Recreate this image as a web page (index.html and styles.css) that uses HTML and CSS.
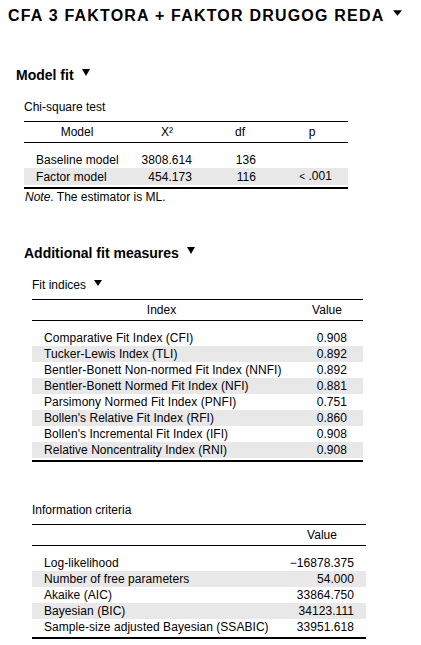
FILE: index.html
```html
<!DOCTYPE html>
<html lang="sr">
<head>
<meta charset="utf-8">
<title>CFA 3 FAKTORA + FAKTOR DRUGOG REDA</title>
<link rel="stylesheet" href="styles.css">
</head>
<body>
<h1 class="title">CFA 3 FAKTORA + FAKTOR DRUGOG REDA<svg class="caret caret-lg" viewBox="0 0 10 6"><polygon points="0,0 10,0 5,6"/></svg></h1>

<section class="group group-model">
  <h2 class="group-title">Model fit<svg class="caret caret-md" viewBox="0 0 8 7"><polygon points="0,0 8,0 4,7"/></svg></h2>
  <div class="result">
    <div class="table-title">Chi-square test</div>
    <div class="tbl tbl-chi">
      <table>
        <thead>
          <tr><th class="c-model">Model</th><th class="c-x2">X²</th><th class="c-df">df</th><th class="c-p">p</th></tr>
        </thead>
        <tbody>
          <tr><td class="c-model">Baseline model</td><td class="c-x2">3808.614</td><td class="c-df">136</td><td class="c-p"></td></tr>
          <tr class="alt"><td class="c-model">Factor model</td><td class="c-x2">454.173</td><td class="c-df">116</td><td class="c-p"><span class="lt">&lt;</span> .001</td></tr>
        </tbody>
      </table>
    </div>
    <div class="note"><i>Note</i>. The estimator is ML.</div>
  </div>
</section>

<section class="group group-add">
  <h2 class="group-title">Additional fit measures<svg class="caret caret-md" viewBox="0 0 8 7"><polygon points="0,0 8,0 4,7"/></svg></h2>
  <div class="result">
    <div class="table-title sub">Fit indices<svg class="caret caret-sm" viewBox="0 0 8 6"><polygon points="0,0 8,0 4,6"/></svg></div>
    <div class="tbl tbl-fit">
      <table>
        <thead>
          <tr><th class="c-name">Index</th><th class="c-val">Value</th></tr>
        </thead>
        <tbody>
          <tr><td class="c-name">Comparative Fit Index (CFI)</td><td class="c-val">0.908</td></tr>
          <tr class="alt"><td class="c-name">Tucker-Lewis Index (TLI)</td><td class="c-val">0.892</td></tr>
          <tr><td class="c-name">Bentler-Bonett Non-normed Fit Index (NNFI)</td><td class="c-val">0.892</td></tr>
          <tr class="alt"><td class="c-name">Bentler-Bonett Normed Fit Index (NFI)</td><td class="c-val">0.881</td></tr>
          <tr><td class="c-name">Parsimony Normed Fit Index (PNFI)</td><td class="c-val">0.751</td></tr>
          <tr class="alt"><td class="c-name">Bollen's Relative Fit Index (RFI)</td><td class="c-val">0.860</td></tr>
          <tr><td class="c-name">Bollen's Incremental Fit Index (IFI)</td><td class="c-val">0.908</td></tr>
          <tr class="alt"><td class="c-name">Relative Noncentrality Index (RNI)</td><td class="c-val">0.908</td></tr>
        </tbody>
      </table>
    </div>

    <div class="table-title sub info">Information criteria</div>
    <div class="tbl tbl-info">
      <table>
        <thead>
          <tr><th class="c-name"></th><th class="c-val">Value</th></tr>
        </thead>
        <tbody>
          <tr><td class="c-name">Log-likelihood</td><td class="c-val">−16878.375</td></tr>
          <tr class="alt"><td class="c-name">Number of free parameters</td><td class="c-val">54.000</td></tr>
          <tr><td class="c-name">Akaike (AIC)</td><td class="c-val">33864.750</td></tr>
          <tr class="alt"><td class="c-name">Bayesian (BIC)</td><td class="c-val">34123.111</td></tr>
          <tr><td class="c-name">Sample-size adjusted Bayesian (SSABIC)</td><td class="c-val">33951.618</td></tr>
        </tbody>
      </table>
    </div>
  </div>
</section>
</body>
</html>
```

FILE: styles.css
```css
html, body {
  margin: 0;
  padding: 0;
  background: #ffffff;
}

body {
  padding: 8px 0 0 8px;
  font-family: "Liberation Sans", Arial, sans-serif;
  color: #000000;
}

.title {
  margin: 0;
  font-size: 16px;
  line-height: 16px;
  font-weight: bold;
  letter-spacing: 1.2px;
  color: #000000;
  white-space: nowrap;
}

.caret {
  display: inline-block;
  fill: #000000;
}

.caret-lg {
  width: 9px;
  height: 6px;
  margin-left: 9px;
  vertical-align: 5px;
}

.caret-md {
  width: 8px;
  height: 7px;
  margin-left: 8px;
  vertical-align: 4px;
}

.caret-sm {
  width: 8px;
  height: 6px;
  margin-left: 8px;
  vertical-align: 3px;
}

.group-title {
  margin: 0;
  font-size: 14px;
  line-height: 16px;
  font-weight: bold;
  color: #000000;
}

.group-model {
  margin: 43px 0 0 8px;
}

.group-model .result {
  margin-left: 8px;
}

.group-add {
  margin: 40px 0 0 16px;
}

.group-add .result {
  margin-left: 8px;
}

.table-title {
  margin: 16px 0 6px 0;
  font-size: 12px;
  line-height: 16px;
}

.table-title.info {
  margin-top: 40px;
}

.tbl {
  padding-bottom: 2px;
  border-bottom: 2px solid #000000;
}

.tbl-chi { width: 324px; }
.tbl-fit { width: 331px; }
.tbl-info { width: 334px; }

table {
  width: 100%;
  border-collapse: separate;
  border-spacing: 0;
  table-layout: fixed;
  font-size: 12px;
  color: #000000;
}

th {
  padding: 0;
  height: 20px;
  line-height: 20px;
  font-weight: normal;
  text-align: center;
  border-top: 1px solid #000000;
  border-bottom: 1px solid #000000;
}

td {
  padding: 0;
  line-height: 16px;
  height: 16px;
  white-space: nowrap;
  letter-spacing: 0.05px;
}

tbody tr:first-child td {
  padding-top: 9px;
}

tr.alt td {
  background: #e8e8e8;
}

/* chi-square table columns */
.tbl-chi .c-model { width: 106px; }
.tbl-chi .c-x2 { width: 74px; }
.tbl-chi .c-df { width: 72px; }
.tbl-chi .c-p { width: 72px; }

.tbl-chi td.c-model { padding-left: 12px; text-align: left; }
.tbl-chi td.c-x2 { padding-right: 12px; text-align: right; }
.tbl-chi td.c-df { padding-right: 20px; text-align: right; }
.tbl-chi td.c-p { padding-right: 16px; text-align: right; }

.lt {
  font-size: 10px;
}

/* fit indices */
.tbl-fit .c-val { width: 72px; }
.tbl-fit td.c-val { padding-right: 16px; text-align: right; }

/* information criteria */
.tbl-info .c-val { width: 88px; }
.tbl-info td.c-val { padding-right: 12px; text-align: right; }

td.c-name { padding-left: 12px; text-align: left; }

.note {
  font-size: 12px;
  line-height: 16px;
  padding-left: 1px;
}
```
